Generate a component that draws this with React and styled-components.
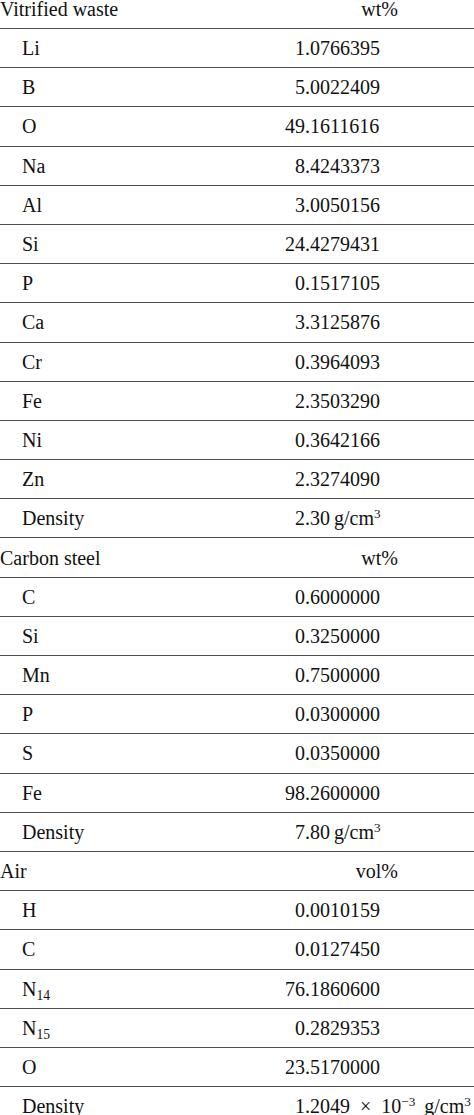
import React from 'react';
import styled, { createGlobalStyle } from 'styled-components';

const GlobalStyle = createGlobalStyle`
  html, body {
    margin: 0;
    padding: 0;
    background: #fff;
    overflow: hidden;
  }
  body {
    font-family: "Liberation Serif", "Times New Roman", serif;
    color: #111;
  }
`;

const Table = styled.div`
  width: 474px;
  margin-top: -10.2px;
  font-size: 20px;
`;

const Row = styled.div`
  display: grid;
  grid-template-columns: 255px 50px 1fr;
  align-items: center;
  height: 39.2px;
  box-sizing: border-box;
  border-bottom: 1.7px solid #4c4c4c;
  white-space: nowrap;
`;

const Label = styled.div`
  padding-left: ${(p) => (p.$header ? '0px' : '22px')};
  padding-top: 1px;
`;

const IntPart = styled.div`
  text-align: right;
  padding-top: 1px;
`;

const Rest = styled.div`
  padding-top: 1px;
`;

const Unit = styled.div`
  grid-column: 2 / 4;
  text-align: right;
  padding-right: 76px;
  padding-top: 1px;
`;

const Sub = styled.sub`
  font-size: 0.68em;
  line-height: 0;
  vertical-align: -0.3em;
`;

const Sup = styled.sup`
  font-size: 0.66em;
  line-height: 0;
  vertical-align: 0.55em;
  margin-right: ${(p) => p.$gap || '0px'};
`;

const gcm = (
  <>
    {'\u2009g/cm'}
    <Sup>3</Sup>
  </>
);

const sections = [
  {
    title: 'Vitrified waste',
    unit: 'wt%',
    rows: [
      ['Li', '1.0766395'],
      ['B', '5.0022409'],
      ['O', '49.1611616'],
      ['Na', '8.4243373'],
      ['Al', '3.0050156'],
      ['Si', '24.4279431'],
      ['P', '0.1517105'],
      ['Ca', '3.3125876'],
      ['Cr', '0.3964093'],
      ['Fe', '2.3503290'],
      ['Ni', '0.3642166'],
      ['Zn', '2.3274090'],
      ['Density', '2.30', gcm],
    ],
  },
  {
    title: 'Carbon steel',
    unit: 'wt%',
    rows: [
      ['C', '0.6000000'],
      ['Si', '0.3250000'],
      ['Mn', '0.7500000'],
      ['P', '0.0300000'],
      ['S', '0.0350000'],
      ['Fe', '98.2600000'],
      ['Density', '7.80', gcm],
    ],
  },
  {
    title: 'Air',
    unit: 'vol%',
    rows: [
      ['H', '0.0010159'],
      ['C', '0.0127450'],
      [<>N<Sub>14</Sub></>, '76.1860600'],
      [<>N<Sub>15</Sub></>, '0.2829353'],
      ['O', '23.5170000'],
      [
        'Density',
        '1.2049',
        <>
          {'\u2002\u00d7\u200210'}
          <Sup $gap="4px">{'\u22123'}</Sup>
          {' g/cm'}
          <Sup>3</Sup>
        </>,
      ],
    ],
  },
];

const ValueRow = ({ label, value, suffix }) => {
  const [int, frac] = value.split('.');
  return (
    <Row>
      <Label>{label}</Label>
      <IntPart>{int}</IntPart>
      <Rest>
        .{frac}
        {suffix}
      </Rest>
    </Row>
  );
};

const App = () => {
  return (
    <>
      <GlobalStyle />
      <Table>
        {sections.map((section) => (
          <React.Fragment key={section.title}>
            <Row>
              <Label $header>{section.title}</Label>
              <Unit>{section.unit}</Unit>
            </Row>
            {section.rows.map(([label, value, suffix], i) => (
              <ValueRow key={i} label={label} value={value} suffix={suffix} />
            ))}
          </React.Fragment>
        ))}
      </Table>
    </>
  );
};

export default App;
